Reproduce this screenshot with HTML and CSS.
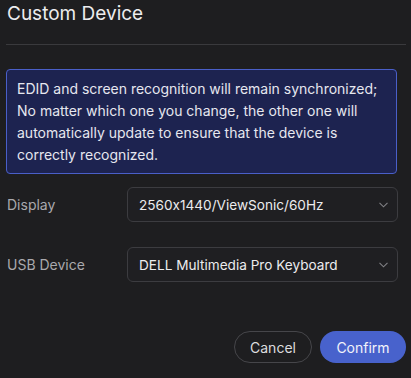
FILE: index.html
```html
<!DOCTYPE html>
<html>
<head>
<meta charset="utf-8">
<link rel="stylesheet" href="styles.css">
</head>
<body>
<div class="dialog">
  <div class="title">Custom Device</div>
  <div class="divider"></div>
  <div class="notice">EDID and screen recognition will remain synchronized; No matter which one you change, the other one will automatically update to ensure that the device is correctly recognized.</div>
  <div class="row">
    <div class="label">Display</div>
    <div class="select"><span>2560x1440/ViewSonic/60Hz</span>
      <svg class="chev" width="9" height="6" viewBox="0 0 9 6"><path d="M0.5 0.8 L4.5 4.8 L8.5 0.8" fill="none" stroke="#808084" stroke-width="1.1"/></svg>
    </div>
  </div>
  <div class="row row2">
    <div class="label">USB Device</div>
    <div class="select"><span>DELL Multimedia Pro Keyboard</span>
      <svg class="chev" width="9" height="6" viewBox="0 0 9 6"><path d="M0.5 0.8 L4.5 4.8 L8.5 0.8" fill="none" stroke="#808084" stroke-width="1.1"/></svg>
    </div>
  </div>
  <div class="actions">
    <button class="btn cancel">Cancel</button>
    <button class="btn confirm">Confirm</button>
  </div>
</div>
</body>
</html>
```

FILE: styles.css
```css
html, body {
  margin: 0;
  padding: 0;
  background: #1e1e20;
  font-family: Inter, "Noto Sans", sans-serif;
  font-feature-settings: "calt" 0;
  color: #e8e8ea;
}
.dialog {
  width: 411px;
  height: 378px;
  box-sizing: border-box;
  padding: 0 5px 0 6px;
  display: flex;
  flex-direction: column;
}
.title {
  font-size: 19px;
  line-height: 24px;
  margin-top: 2px;
  padding-left: 1px;
  color: #ececee;
}
.divider {
  height: 1px;
  background: #3a3a3d;
  margin-top: 18px;
}
.notice {
  margin-top: 24px;
  width: 391px;
  box-sizing: border-box;
  background: #1d2350;
  border: 1px solid #4a5fc8;
  border-radius: 4px;
  padding: 8px 10px 7px 10px;
  font-size: 14px;
  line-height: 22px;
  color: #e6e7ef;
}
.row {
  display: flex;
  align-items: center;
  margin-top: 13px;
}
.row2 { margin-top: 25px; }
.label {
  width: 120px;
  padding-left: 1px;
  font-size: 14px;
  color: #a9a9ad;
}
.select {
  width: 271px;
  height: 35px;
  box-sizing: border-box;
  border: 1px solid #3c3c40;
  border-radius: 6px;
  background: #1f1f22;
  display: flex;
  align-items: center;
  justify-content: space-between;
  padding: 0 9px 0 11px;
  font-size: 13.6px;
  color: #ececee;
}
.chev { margin-top: 1px; }
.actions {
  display: flex;
  justify-content: flex-end;
  gap: 8px;
  margin-top: 49px;
}
.btn {
  height: 32px;
  border-radius: 16px;
  font-family: Inter, "Noto Sans", sans-serif;
  font-size: 14px;
  padding: 0;
  cursor: pointer;
}
.cancel {
  width: 78px;
  background: transparent;
  border: 1px solid #46464a;
  color: #dcdcde;
}
.confirm {
  width: 86px;
  background: #4862cc;
  border: none;
  color: #f2f3fa;
}
```
